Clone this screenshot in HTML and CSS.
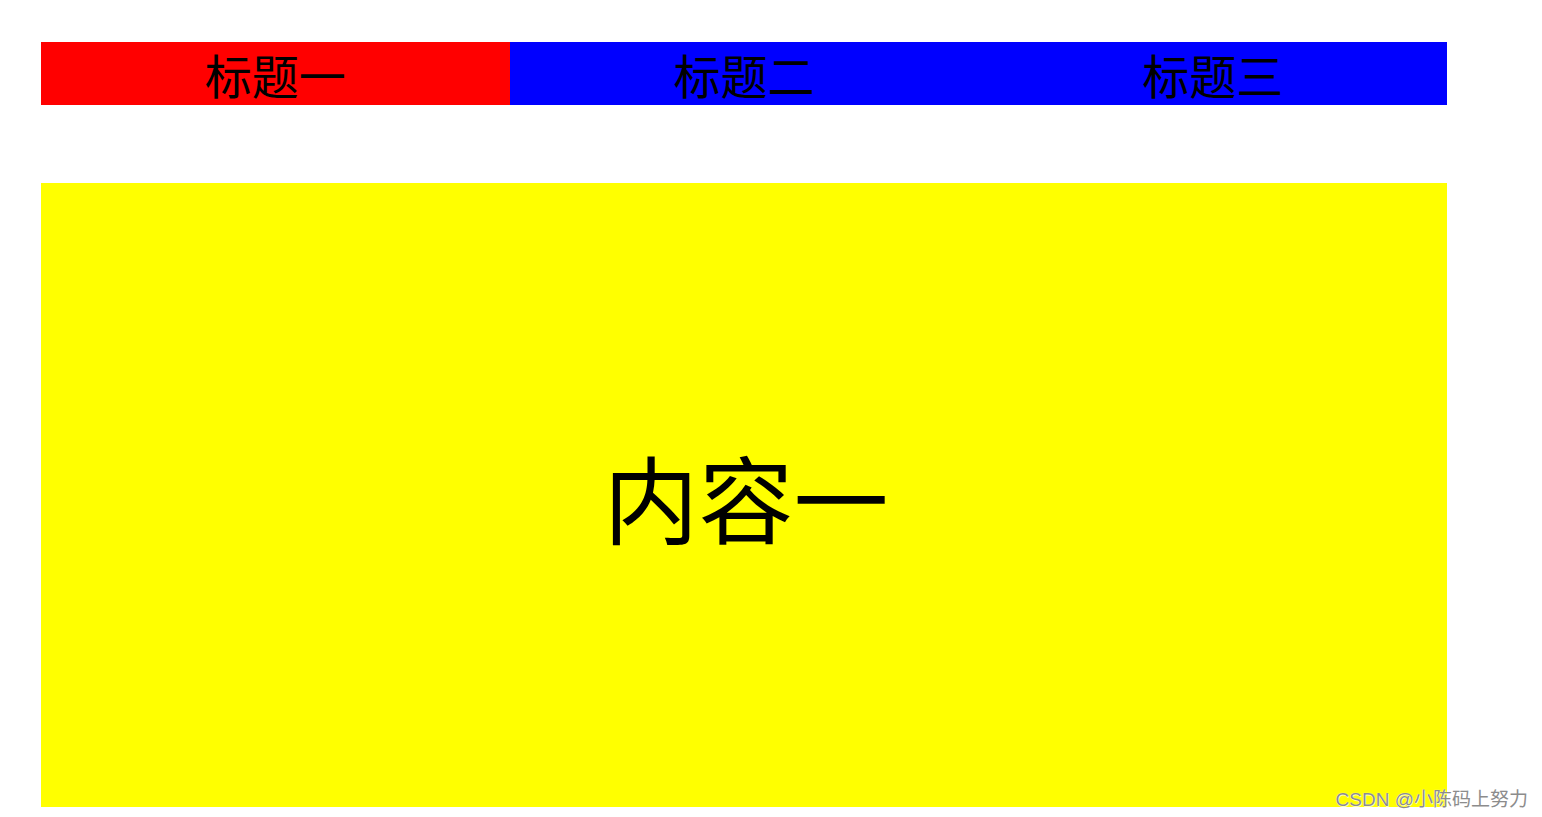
FILE: index.html
```html
<!DOCTYPE html>
<html lang="zh-CN">
<head>
<meta charset="utf-8">
<title>Tabs</title>
<link rel="stylesheet" href="styles.css">
</head>
<body>
<div class="page">
  <div class="tabs">
    <div class="tab active">标题一</div>
    <div class="tab">标题二</div>
    <div class="tab">标题三</div>
  </div>
  <div class="content">内容一</div>
</div>
<div class="watermark">CSDN @小陈码上努力</div>
</body>
</html>
```
FILE: styles.css
```css
html, body {
  margin: 0;
  padding: 0;
  background: #fff;
}
body {
  font-family: "Noto Sans CJK SC", "Noto Sans", sans-serif;
  color: #000;
  height: 817px;
  overflow: hidden;
}
.page {
  width: 1406px;
  margin: 42px 0 0 41px;
}
.tabs {
  display: flex;
  height: 63px;
  background: #0000ff;
}
.tab {
  flex: 1;
  display: flex;
  align-items: center;
  justify-content: center;
  font-size: 47px;
  line-height: 1;
  padding-top: 0;
  box-sizing: border-box;
}
.tab.active {
  background: #ff0000;
}
.content {
  margin-top: 78px;
  height: 624px;
  background: #ffff00;
  display: flex;
  align-items: center;
  justify-content: center;
  font-size: 95px;
  line-height: 1;
  padding: 0 0 0 4px;
  box-sizing: border-box;
}
.watermark {
  position: absolute;
  right: 14px;
  bottom: 8px;
  font-family: "Liberation Sans", "Noto Sans CJK SC", sans-serif;
  font-size: 19px;
  line-height: 1;
  color: #8c8c8c;
  text-shadow: 0 0 1px #fff, 1px 1px 0 rgba(255,255,255,0.7);
}
```
